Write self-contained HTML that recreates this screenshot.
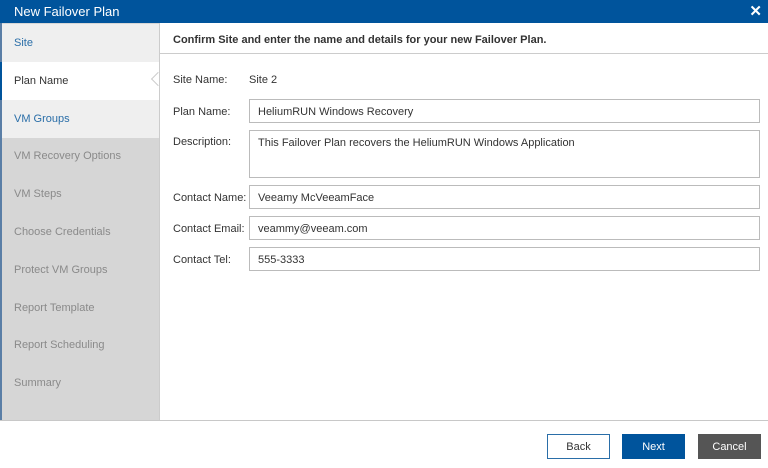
<!DOCTYPE html>
<html><head><style>
*{margin:0;padding:0;box-sizing:border-box}
body{width:768px;height:468px;background:#fff;font-family:"Liberation Sans",sans-serif;font-size:11px;color:#333;position:relative;overflow:hidden}
.hdr{position:absolute;left:0;top:0;width:768px;height:23px;background:#00549c;color:#fff;font-size:13px;line-height:23px;padding-left:14px}
.x{position:absolute;right:6px;top:0;font-size:15px;font-weight:bold}
.side{position:absolute;left:0;top:23px;width:159px;height:397px;background:#d6d6d6;border-left:2px solid #5a7ea6}
.it{position:absolute;left:0;width:157px;height:38px;line-height:38px;padding-left:12px;color:#8a8a8a}
.a{background:#efefef;color:#2a6ea8}
.sel{background:#fff;color:#333}
.bar{position:absolute;left:-2px;top:62px;width:4px;height:38px;background:#00549c}
.ch{position:absolute;left:160px;top:23px;width:608px;height:31px;border-bottom:1px solid #ccc;font-weight:bold;line-height:34px;padding-left:13px;font-size:11px}
.lbl{position:absolute;left:173px}
.in{position:absolute;left:249px;width:511px;height:24px;border:1px solid #bbb;padding:7px 8px;line-height:11px}
.foot{position:absolute;left:0;top:420px;width:768px;border-top:1px solid #c8c8c8}
.btn{position:absolute;top:434px;width:63px;height:25px;display:flex;align-items:center;justify-content:center}
</style></head><body>
<div class="hdr">New Failover Plan<span class="x">✕</span></div>
<div class="side">
<div class="it a" style="top:1px">Site</div>
<div class="it sel" style="top:39px">Plan Name</div>
<div class="it a" style="top:77px">VM Groups</div>
<div class="it" style="top:114px">VM Recovery Options</div>
<div class="it" style="top:152px">VM Steps</div>
<div class="it" style="top:190px">Choose Credentials</div>
<div class="it" style="top:228px">Protect VM Groups</div>
<div class="it" style="top:266px">Report Template</div>
<div class="it" style="top:303px">Report Scheduling</div>
<div class="it" style="top:341px">Summary</div>
</div>
<div class="bar"></div>
<div style="position:absolute;left:153px;top:74px;width:10px;height:10px;background:#fff;border-left:1px solid #ccc;border-bottom:1px solid #ccc;transform:rotate(45deg)"></div>
<div style="position:absolute;left:159px;top:23px;width:1px;height:397px;background:#ccc"></div>
<div class="ch">Confirm Site and enter the name and details for your new Failover Plan.</div>
<div class="lbl" style="top:74px">Site Name:</div><div style="position:absolute;left:249px;top:74px">Site 2</div>
<div class="lbl" style="top:106px">Plan Name:</div><div class="in" style="top:99px">HeliumRUN Windows Recovery</div>
<div class="lbl" style="top:136px">Description:</div><div class="in" style="top:130px;height:48px">This Failover Plan recovers the HeliumRUN Windows Application</div>
<div class="lbl" style="top:192px">Contact Name:</div><div class="in" style="top:185px">Veeamy McVeeamFace</div>
<div class="lbl" style="top:223px">Contact Email:</div><div class="in" style="top:216px">veammy@veeam.com</div>
<div class="lbl" style="top:254px">Contact Tel:</div><div class="in" style="top:247px">555-3333</div>
<div class="foot"></div>
<div class="btn" style="left:547px;border:1px solid #2a6ea8;color:#333">Back</div>
<div class="btn" style="left:622px;background:#00549c;color:#fff">Next</div>
<div class="btn" style="left:698px;background:#555;color:#fff">Cancel</div>
</body></html>
